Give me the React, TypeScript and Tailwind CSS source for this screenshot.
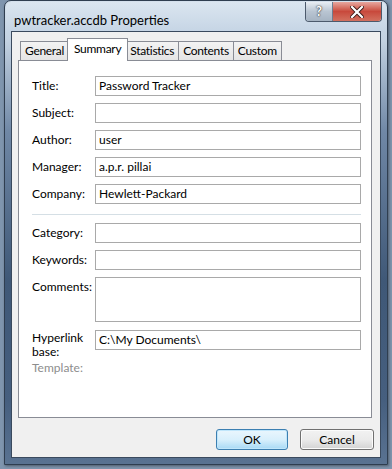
import React from "react"

const font = { fontFamily: 'Lato, "Noto Sans", Arial, sans-serif' }

function Field({ label, value, tall }: { label: string; value?: string; tall?: boolean }) {
  return (
    <div className="flex items-start">
      <div className="w-[63px] shrink-0 pt-[2px] text-[12px] leading-[16px] text-black">{label}</div>
      <div
        className={`flex-1 border border-[#a9a9a9] bg-white px-[3px] text-[12px] leading-[18px] text-black ${tall ? "h-[45px]" : "h-[20px]"}`}
      >
        {value}
      </div>
    </div>
  )
}

function Tab({ label, active }: { label: string; active?: boolean }) {
  if (active) {
    return (
      <div className="relative z-10 -mx-[2px] -mb-px h-[23px] border border-b-0 border-[#898c95] bg-white px-[6px] pt-[2px] text-[12px] leading-[16px] tracking-[-0.3px]">
        {label}
      </div>
    )
  }
  return (
    <div className="h-[19px] -ml-px first:ml-0 border border-b-0 border-[#898c95] bg-gradient-to-b from-[#f3f3f3] to-[#e5e5e5] px-[4px] pt-[1px] text-[12px] leading-[16px] tracking-[-0.3px]">
      {label}
    </div>
  )
}

export default function App() {
  return (
    <div className="h-[469px] w-[392px] overflow-hidden bg-[#7f95ae]" style={font}>
      <div className="ml-[4px] h-[465px] w-[384px] rounded-t-[7px] border border-[#2f3e50] bg-[linear-gradient(to_bottom,#d4e0ec_0px,#c2d1e1_40px,#7088a6_130px,#3f5877_280px,#465f7f_400px,#5a7392_465px)] p-px pb-[6px] shadow-[1px_1px_3px_rgba(0,0,0,0.4)]">
        <div className="flex h-full flex-col rounded-t-[6px]">
          <div className="flex h-[29px] items-start rounded-t-[6px] bg-gradient-to-b from-[#dbe6f0] to-[#c6d5e5]">
            <div className="pl-[8px] pt-[10px] text-[13px] leading-[16px] text-black">pwtracker.accdb Properties</div>
            <div className="ml-auto mr-[4px] flex h-[20px] overflow-hidden rounded-b-[4px] border border-t-0 border-[#4c5a6c]">
              <div className="flex w-[27px] items-center justify-center border-r border-[#6d7d90] bg-gradient-to-b from-[#e9eef3] via-[#b9c5d2] to-[#a6b4c3] text-[13px] font-bold leading-none text-white [text-shadow:0_0_2px_#333,0_0_1px_#333]">
                ?
              </div>
              <div className="flex w-[48px] items-center justify-center bg-gradient-to-b from-[#e7a79f] via-[#c8493c] to-[#d2705f]">
                <svg width="14" height="12" viewBox="0 0 14 12">
                  <path d="M2 1 L12 11 M12 1 L2 11" stroke="#3a1a16" strokeWidth="4" strokeLinecap="square" />
                  <path d="M2 1 L12 11 M12 1 L2 11" stroke="#ffffff" strokeWidth="2.2" strokeLinecap="square" />
                </svg>
              </div>
            </div>
          </div>
          <div className="mx-[5px] flex flex-1 flex-col border border-[#3a4a5e] bg-[#f0f0f0]">
            <div className="ml-[6px] mr-[8px] mt-[6px] flex flex-col">
              <div className="flex items-end pl-[2px]">
                <Tab label="General" />
                <Tab label="Summary" active />
                <Tab label="Statistics" />
                <Tab label="Contents" />
                <Tab label="Custom" />
              </div>
              <div className="flex h-[358px] flex-col border border-[#898c95] bg-white pl-[13px] pr-[10px] pt-[15px]">
                <div className="flex flex-col gap-[7px]">
                  <Field label="Title:" value="Password Tracker" />
                  <Field label="Subject:" />
                  <Field label="Author:" value="user" />
                  <Field label="Manager:" value="a.p.r. pillai" />
                  <Field label="Company:" value="Hewlett-Packard" />
                </div>
                <div className="mb-[8px] mt-[10px] h-px bg-[#d5dfe5]" />
                <div className="flex flex-col gap-[7px]">
                  <Field label="Category:" />
                  <Field label="Keywords:" />
                  <Field label="Comments:" tall />
                </div>
                <div className="mt-[8px] flex items-start">
                  <div className="flex w-[63px] shrink-0 flex-col pt-[1px] text-[12px] leading-[14px] text-black">
                    <span>Hyperlink</span>
                    <span>base:</span>
                  </div>
                  <div className="h-[20px] flex-1 border border-[#a9a9a9] bg-white px-[3px] text-[12px] leading-[18px]">
                    C:\My Documents\
                  </div>
                </div>
                <div className="mt-[1px] text-[12px] leading-[16px] text-[#8d8d8d]">Template:</div>
              </div>
            </div>
            <div className="mr-[6px] mt-[11px] flex justify-end gap-[12px]">
              <div className="flex h-[21px] w-[72px] items-center justify-center rounded-[3px] border border-[#3c7fb1] bg-gradient-to-b from-[#eaf6fd] via-[#d9f0fc] to-[#a7d9f5] text-[12px] shadow-[inset_0_0_0_1px_#c0e6fb]">
                OK
              </div>
              <div className="flex h-[21px] w-[74px] items-center justify-center rounded-[3px] border border-[#707070] bg-gradient-to-b from-[#f2f2f2] via-[#ebebeb] to-[#d3d3d3] text-[12px] shadow-[inset_0_0_0_1px_#fbfbfb]">
                Cancel
              </div>
            </div>
          </div>
        </div>
      </div>
    </div>
  )
}
